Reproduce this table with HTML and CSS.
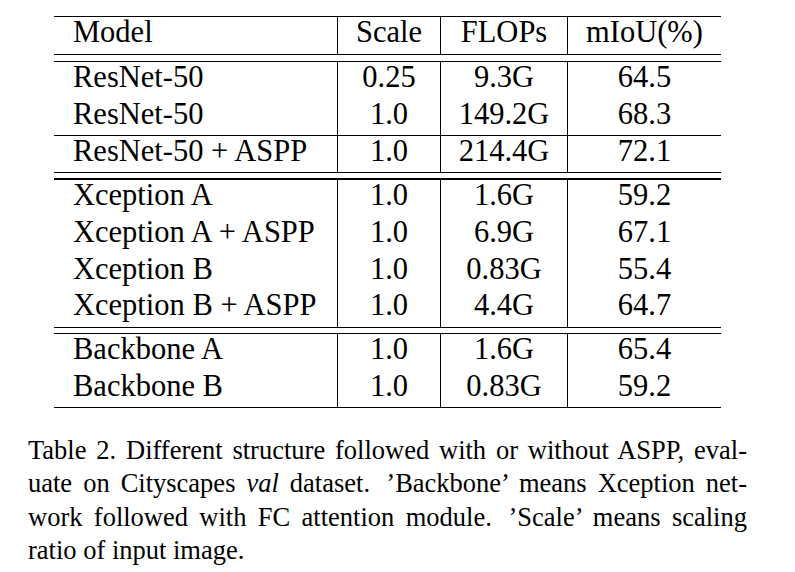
FILE: index.html
```html
<!DOCTYPE html>
<html lang="en">
<head>
<meta charset="utf-8">
<title>Table 2</title>
<link rel="stylesheet" href="styles.css">
</head>
<body>
<div class="page">
  <div class="tbl">
    <div class="sec sec-head">
      <div class="row r37"><div class="m">Model</div><div class="c">Scale</div><div class="c">FLOPs</div><div class="c">mIoU(%)</div></div>
    </div>
    <div class="sec sec-a">
      <div class="row r37"><div class="m">ResNet-50</div><div class="c">0.25</div><div class="c">9.3G</div><div class="c">64.5</div></div>
      <div class="row r36"><div class="m">ResNet-50</div><div class="c">1.0</div><div class="c">149.2G</div><div class="c">68.3</div></div>
      <div class="row r36 rule"><div class="m">ResNet-50 + ASPP</div><div class="c">1.0</div><div class="c">214.4G</div><div class="c">72.1</div></div>
    </div>
    <div class="sec sec-b">
      <div class="row r3675"><div class="m">Xception A</div><div class="c">1.0</div><div class="c">1.6G</div><div class="c">59.2</div></div>
      <div class="row r3675"><div class="m">Xception A + ASPP</div><div class="c">1.0</div><div class="c">6.9G</div><div class="c">67.1</div></div>
      <div class="row r3675"><div class="m">Xception B</div><div class="c">1.0</div><div class="c">0.83G</div><div class="c">55.4</div></div>
      <div class="row r3675"><div class="m">Xception B + ASPP</div><div class="c">1.0</div><div class="c">4.4G</div><div class="c">64.7</div></div>
    </div>
    <div class="sec sec-c">
      <div class="row r365"><div class="m">Backbone A</div><div class="c">1.0</div><div class="c">1.6G</div><div class="c">65.4</div></div>
      <div class="row r365"><div class="m">Backbone B</div><div class="c">1.0</div><div class="c">0.83G</div><div class="c">59.2</div></div>
    </div>
  </div>
  <p class="caption">
    <span class="ln">Table 2. Different structure followed with or without ASPP, eval-</span>
    <span class="ln">uate on Cityscapes <i>val</i> dataset.&thinsp; ’Backbone’ means Xception net-</span>
    <span class="ln">work followed with FC attention module.&thinsp; ’Scale’ means scaling</span>
    <span class="ln last">ratio of input image.</span>
  </p>
</div>
</body>
</html>
```

FILE: styles.css
```css
html, body {
  margin: 0;
  padding: 0;
  background: #fff;
}

.page {
  width: 795px;
  height: 572px;
  overflow: hidden;
  color: #000;
  font-family: "Liberation Serif", "Times New Roman", serif;
}

.tbl {
  margin: 16px 0 0 54px;
  width: 667px;
  font-size: 30.5px;
}

.sec {
  border-top: 1px solid #000;
  border-bottom: 1px solid #000;
}

.sec-a { margin-top: 6px; }
.sec-b { margin-top: 5px; border-top-width: 2px; }
.sec-c { margin-top: 5px; }

.row {
  display: grid;
  grid-template-columns: 283px 103px 127px 154px;
  line-height: 30px;
}

.r37 { height: 37px; }
.r36 { height: 36px; }
.r3675 { height: 36.75px; }
.r365 { height: 36.5px; }

.rule { border-top: 1px solid #000; }

.m {
  padding-left: 19px;
  text-align: left;
  white-space: nowrap;
}

.c {
  border-left: 1px solid #000;
  text-align: center;
  white-space: nowrap;
}

.caption {
  margin: 26px 0 0 28px;
  width: 719px;
  font-size: 26.5px;
  line-height: 33.3px;
}

.ln {
  display: block;
  text-align: justify;
  text-align-last: justify;
  white-space: nowrap;
}

.ln.last {
  text-align: left;
  text-align-last: left;
}
```
